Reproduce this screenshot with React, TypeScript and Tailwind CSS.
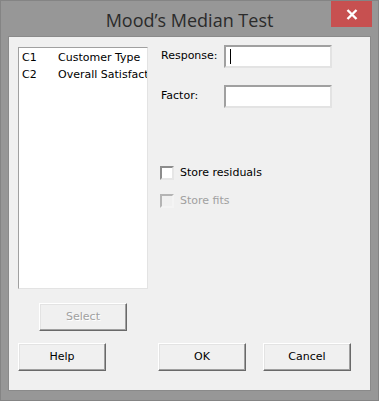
import React from 'react';

const sunken = 'border-t-[#a0a0a0] border-l-[#a0a0a0] border-b-[#e3e3e3] border-r-[#e3e3e3]';

const WinButton: React.FC<{ label: string; disabled?: boolean; className?: string }> = ({ label, disabled, className = '' }) => (
  <button
    className={`w-[88px] h-[28px] bg-[#f0f0f0] border border-t-white border-l-white border-b-[#696969] border-r-[#696969] shadow-[inset_-1px_-1px_0_#a0a0a0,inset_1px_1px_0_#e3e3e3] text-[11px] ${
      disabled ? 'text-[#a0a0a0] [text-shadow:1px_1px_0_#ffffff]' : 'text-black'
    } ${className}`}
  >
    {label}
  </button>
);

const CheckRow: React.FC<{ label: string; disabled?: boolean; className?: string }> = ({ label, disabled, className = '' }) => (
  <div className={`flex items-center gap-[6px] ${className}`}>
    <div
      className={`w-[14px] h-[14px] border-2 ${
        disabled
          ? 'bg-[#f0f0f0] border-t-[#b4b4b4] border-l-[#b4b4b4] border-b-[#f4f4f4] border-r-[#f4f4f4]'
          : 'bg-white border-t-[#8c8c8c] border-l-[#8c8c8c] border-b-[#e6e6e6] border-r-[#e6e6e6]'
      }`}
    />
    <span className={disabled ? 'text-[#a0a0a0]' : 'text-black'}>{label}</span>
  </div>
);

const App: React.FC = () => {
  return (
    <div className="w-[379px] h-[401px] bg-[#979797] border border-[#848484] flex flex-col font-['DejaVu_Sans',Tahoma,sans-serif] text-[11px] text-black select-none">
      {/* Title bar */}
      <div className="relative h-[35px] flex items-center justify-center">
        <span className="font-['Open_Sans',sans-serif] text-[18px] text-[#2b2b2b] leading-none mt-[2px]">Mood’s Median Test</span>
        <div className="absolute right-[6px] top-0 w-[41px] h-[26px] bg-[#c75050] flex items-center justify-center">
          <svg width="12" height="11" viewBox="0 0 12 11">
            <path d="M1.5 1 L10.5 10 M10.5 1 L1.5 10" stroke="white" strokeWidth="2.4" />
          </svg>
        </div>
      </div>

      {/* Client area */}
      <div className="mx-[7px] h-[355px] bg-[#f0f0f0] border border-[#8a8a8a] pl-[9px] pt-[8px] flex flex-col">
        <div className="flex">
          {/* Variables list */}
          <div className="w-[130px] flex flex-col items-center">
            <div className={`w-[130px] h-[242px] mt-[2px] bg-white border ${sunken} border-l-[#696969] border-t-[#a0a0a0] overflow-hidden pl-[3px] pt-[2px]`}>
              <div className="flex h-[17px] items-center whitespace-nowrap">
                <span className="w-[36px] shrink-0">C1</span>
                <span>Customer Type</span>
              </div>
              <div className="flex h-[17px] items-center whitespace-nowrap">
                <span className="w-[36px] shrink-0">C2</span>
                <span>Overall Satisfaction</span>
              </div>
            </div>
            <WinButton label="Select" disabled className="mt-[14px]" />
          </div>

          {/* Options */}
          <div className="ml-[13px] flex flex-col">
            <div className="flex items-center h-[23px]">
              <span className="w-[63px]">Response:</span>
              <div className={`w-[108px] h-[23px] bg-white border-2 ${sunken} border-t-[#7a7a7a] border-l-[#7a7a7a] flex items-center pl-[4px]`}>
                <div className="w-[1px] h-[15px] bg-black" />
              </div>
            </div>
            <div className="flex items-center h-[23px] mt-[17px]">
              <span className="w-[63px]">Factor:</span>
              <div className={`w-[108px] h-[23px] bg-white border-2 ${sunken} border-t-[#7a7a7a] border-l-[#7a7a7a]`} />
            </div>
            <CheckRow label="Store residuals" className="mt-[57px] -ml-[1px]" />
            <CheckRow label="Store fits" disabled className="mt-[11px] -ml-[1px]" />
          </div>
        </div>

        {/* Bottom buttons */}
        <div className="flex mt-[12px]">
          <WinButton label="Help" />
          <WinButton label="OK" className="ml-[52px]" />
          <WinButton label="Cancel" className="ml-[17px]" />
        </div>
      </div>
    </div>
  );
};

export default App;
